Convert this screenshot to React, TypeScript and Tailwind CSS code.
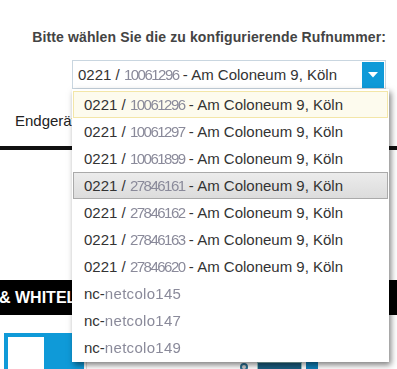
import React from "react";

const items: { pre: string; num: string; post: string; tight: boolean }[] = [
  { pre: "0221 / ", num: "10061296", post: " - Am Coloneum 9, Köln", tight: true },
  { pre: "0221 / ", num: "10061297", post: " - Am Coloneum 9, Köln", tight: true },
  { pre: "0221 / ", num: "10061899", post: " - Am Coloneum 9, Köln", tight: true },
  { pre: "0221 / ", num: "27846161", post: " - Am Coloneum 9, Köln", tight: true },
  { pre: "0221 / ", num: "27846162", post: " - Am Coloneum 9, Köln", tight: true },
  { pre: "0221 / ", num: "27846163", post: " - Am Coloneum 9, Köln", tight: true },
  { pre: "0221 / ", num: "27846620", post: " - Am Coloneum 9, Köln", tight: true },
  { pre: "nc-", num: "netcolo145", post: "", tight: false },
  { pre: "nc-", num: "netcolo147", post: "", tight: false },
  { pre: "nc-", num: "netcolo149", post: "", tight: false },
];

function Masked({ text, tight }: { text: string; tight: boolean }) {
  return (
    <span className={"text-[#8a8a9a] blur-[0.7px] " + (tight ? "tracking-[-1.5px]" : "tracking-[0.3px]")}>
      {text}
    </span>
  );
}

export default function App() {
  return (
    <div
      className="relative w-[397px] h-[369px] overflow-hidden bg-white text-[#333]"
      style={{ fontFamily: '"Liberation Sans", Arial, sans-serif' }}
    >
      {/* Title */}
      <div className="pt-[30px] pr-[11px] text-right text-[14px] font-bold leading-[15px] tracking-[0.12px] text-[#444] whitespace-nowrap">
        Bitte wählen Sie die zu konfigurierende Rufnummer:
      </div>

      {/* Select */}
      <div className="mt-[15px] flex justify-end pr-[11px]">
        <div className="flex h-[29px] w-[314px] items-center border border-[#c9d6e0] bg-white pl-[5px] pr-[1px]">
          <div className="flex-1 text-[15px] leading-[17px] text-[#333] whitespace-nowrap">
            0221 / <Masked text="10061296" tight /> - Am Coloneum 9, Köln
          </div>
          <div className="flex h-[26px] w-[22px] items-center justify-center bg-[#0f9ad8]">
            <svg width="10" height="6" viewBox="0 0 10 6">
              <path d="M0 0 H10 L5 5.5 Z" fill="#fff" />
            </svg>
          </div>
        </div>
      </div>

      {/* Tab label */}
      <div className="mt-[23px] pl-[15px] text-[15px] leading-[17px] text-[#222]">Endgerät</div>

      {/* Black rule */}
      <div className="mt-[17px] h-[4px] bg-[#111]" />

      {/* Black band */}
      <div className="mt-[130px] flex h-[35px] items-center bg-black text-[16px] font-bold text-white">
        <span className="-ml-[1px] whitespace-nowrap">&amp; WHITELIST</span>
      </div>

      {/* Blue row */}
      <div className="mt-[18px] flex h-[40px]">
        <div className="ml-[4px] w-[80px] bg-[#0f9ad8] pl-[4px] pt-[4px]">
          <div className="h-full w-[36px] bg-white" />
        </div>
        <div className="ml-[2px] w-px bg-[#ddd]" />
        <div className="flex-1" />
      </div>
      <div className="absolute left-[240px] top-[362px] flex h-[10px] items-start gap-[4px]">
        <div className="mt-[1px] h-[8px] w-[8px] rounded-full border-2 border-[#2a6f92] bg-[#ccc]" />
        <div className="ml-[5px] h-[10px] w-[45px] border border-[#9cc] bg-[#1b5e80]" />
        <div className="h-[10px] w-[12px] bg-[#0f7fb8]" />
      </div>

      {/* Dropdown list */}
      <div className="absolute left-[72px] top-[89px] h-[273px] w-[317px] bg-white px-px pt-[2px] shadow-[2px_3px_6px_rgba(0,0,0,0.5)]">
        {items.map((it, i) => (
          <div
            key={i}
            className={
              "flex h-[27px] items-center pl-[10px] text-[15px] leading-[17px] " +
              (i === 0
                ? "border border-[#f3e6a8] bg-[#fdfbee]"
                : i === 3
                ? "border border-[#aaa] bg-gradient-to-b from-[#ececec] to-[#dcdcdc]"
                : "border border-transparent")
            }
          >
            <span className="whitespace-pre">
              {it.pre}
              <Masked text={it.num} tight={it.tight} />
              {it.post}
            </span>
          </div>
        ))}
      </div>
    </div>
  );
}
